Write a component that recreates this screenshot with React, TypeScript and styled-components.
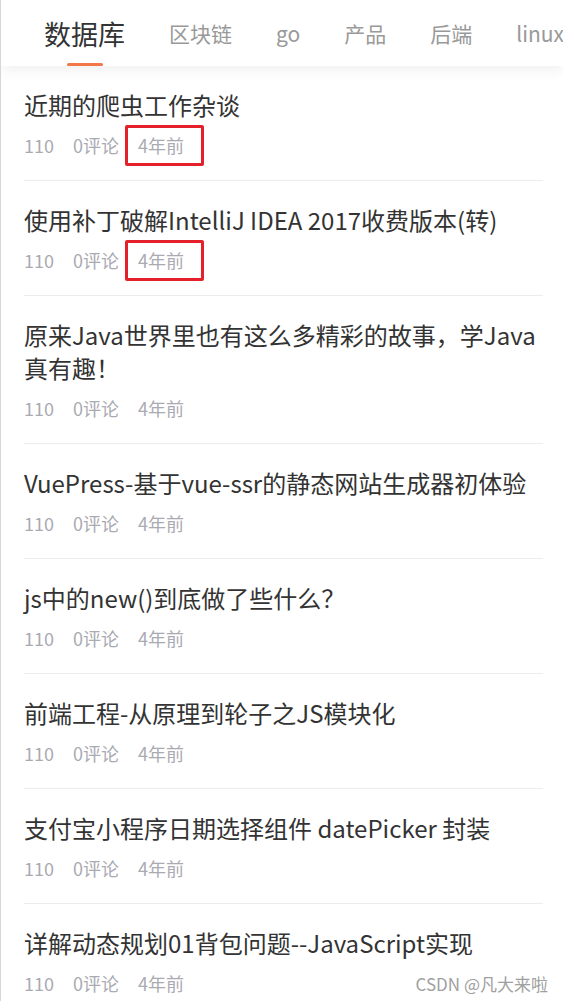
import React, { useState } from 'react';
import styled, { createGlobalStyle } from 'styled-components';

const GlobalStyle = createGlobalStyle`
  html, body {
    margin: 0;
    padding: 0;
    background: #fff;
    overflow: hidden;
  }
  body {
    font-family: "Noto Sans CJK SC", "Liberation Sans", sans-serif;
  }
`;

const Page = styled.div`
  position: relative;
  height: 1001px;
  border-left: 1px solid #d6d6d6;
  background: #fff;
  overflow: hidden;
`;

const TabBar = styled.nav`
  display: flex;
  align-items: center;
  height: 66px;
  padding-left: 21px;
  background: #fff;
  box-shadow: 0 3px 14px rgba(0, 0, 0, 0.07);
  white-space: nowrap;
  overflow: hidden;
  position: relative;
  z-index: 1;
`;

const Tab = styled.div<{ $active: boolean }>`
  position: relative;
  flex-shrink: 0;
  height: 66px;
  display: flex;
  align-items: center;
  padding: 0 22px;
  font-size: ${(props) => (props.$active ? '27px' : '21px')};
  color: ${(props) => (props.$active ? '#333' : '#999')};
  cursor: pointer;

  &::after {
    content: '';
    display: ${(props) => (props.$active ? 'block' : 'none')};
    position: absolute;
    left: 50%;
    bottom: 0;
    width: 36px;
    height: 3px;
    margin-left: -18px;
    border-radius: 2px;
    background: #f4774a;
  }
`;

const List = styled.ul`
  list-style: none;
  margin: 0;
  padding: 0 20px 0 23px;
`;

const Item = styled.li`
  padding: 22px 0 23px;
  border-bottom: 1px solid #ececec;
`;

const Title = styled.h3`
  margin: 0;
  font-size: 24px;
  font-weight: 400;
  line-height: 33px;
  color: #333;
`;

const Meta = styled.div`
  display: flex;
  margin-top: 12px;
  font-size: 18px;
  line-height: 24px;
  color: #aaaab2;
`;

const MetaText = styled.span<{ $marked?: boolean }>`
  position: relative;
  margin-right: 19px;

  &::after {
    content: '';
    display: ${(props) => (props.$marked ? 'block' : 'none')};
    position: absolute;
    left: -13px;
    right: -20px;
    top: -8px;
    bottom: -9px;
    border: 3px solid #e4202b;
    border-radius: 2px;
  }
`;

const Watermark = styled.div`
  position: absolute;
  right: 15px;
  bottom: 5px;
  font-size: 17px;
  line-height: 24px;
  color: #a0a0a0;
  text-shadow: 0 0 2px #fff;
`;

const tabs = ['数据库', '区块链', 'go', '产品', '后端', 'linux'];

const posts = [
  { title: '近期的爬虫工作杂谈', marked: true },
  { title: '使用补丁破解IntelliJ IDEA 2017收费版本(转)', marked: true },
  { title: '原来Java世界里也有这么多精彩的故事，学Java真有趣！' },
  { title: 'VuePress-基于vue-ssr的静态网站生成器初体验' },
  { title: 'js中的new()到底做了些什么？' },
  { title: '前端工程-从原理到轮子之JS模块化' },
  { title: '支付宝小程序日期选择组件 datePicker 封装' },
  { title: '详解动态规划01背包问题--JavaScript实现' },
];

const App = () => {
  const [active, setActive] = useState('数据库');

  return (
    <Page>
      <GlobalStyle />
      <TabBar>
        {tabs.map((tab) => (
          <Tab key={tab} $active={active === tab} onClick={() => setActive(tab)}>
            {tab}
          </Tab>
        ))}
      </TabBar>
      <List>
        {posts.map((post) => (
          <Item key={post.title}>
            <Title>{post.title}</Title>
            <Meta>
              <MetaText>110</MetaText>
              <MetaText>0评论</MetaText>
              <MetaText $marked={post.marked}>4年前</MetaText>
            </Meta>
          </Item>
        ))}
      </List>
      <Watermark>CSDN @凡大来啦</Watermark>
    </Page>
  );
};

export default App;
